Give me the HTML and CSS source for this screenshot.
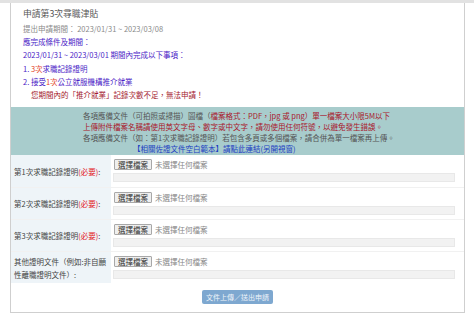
FILE: index.html
```html
<!DOCTYPE html>
<html lang="zh-Hant">
<head>
<meta charset="utf-8">
<link rel="stylesheet" href="styles.css">
</head>
<body>
<div class="topbar"></div>
<div class="panel">
  <div class="head">
    <div class="title">申請第3次尋職津貼</div>
    <div class="line period">提出申請期間： 2023/01/31 ~ 2023/03/08</div>
    <div class="line purple">應完成條件及期間：</div>
    <div class="line purple">2023/01/31 ~ 2023/03/01 期間內完成以下事項：</div>
    <div class="line purple">1. <span class="hl">3次</span>求職記錄證明</div>
    <div class="line purple">2. 接受<span class="hl">1次</span>公立就服機構推介就業</div>
    <div class="line warn">您期間內的「推介就業」記錄次數不足，無法申請！</div>
  </div>
  <div class="notice">
    <div class="nline">各項應備文件（可拍照或掃描）圖檔（<span class="red">檔案格式：PDF，jpg 或 png）單一檔案大小限5M以下</span></div>
    <div class="nline red">上傳附件檔案名稱請使用英文字母、數字或中文字，請勿使用任何符號，以避免發生錯誤。</div>
    <div class="nline">各項應備文件（如：第1次求職記錄證明）若包含多頁或多個檔案，請合併為單一檔案再上傳。</div>
    <div class="nline link">【相關佐證文件空白範本】請點此連結(另開視窗)</div>
  </div>
  <div class="form">
    <div class="row">
      <div class="label">第1次求職記錄證明<span class="req">(必要)</span>:</div>
      <div class="field">
        <div class="file"><span class="btn">選擇檔案</span><span class="none">未選擇任何檔案</span></div>
        <div class="bar"></div>
      </div>
    </div>
    <div class="row">
      <div class="label">第2次求職記錄證明<span class="req">(必要)</span>:</div>
      <div class="field">
        <div class="file"><span class="btn">選擇檔案</span><span class="none">未選擇任何檔案</span></div>
        <div class="bar"></div>
      </div>
    </div>
    <div class="row">
      <div class="label">第3次求職記錄證明<span class="req">(必要)</span>:</div>
      <div class="field">
        <div class="file"><span class="btn">選擇檔案</span><span class="none">未選擇任何檔案</span></div>
        <div class="bar"></div>
      </div>
    </div>
    <div class="row">
      <div class="label">其他證明文件（例如:非自願性離職證明文件）:</div>
      <div class="field">
        <div class="file"><span class="btn">選擇檔案</span><span class="none">未選擇任何檔案</span></div>
        <div class="bar"></div>
      </div>
    </div>
  </div>
  <div class="actions">
    <span class="submit">文件上傳／送出申請</span>
  </div>
</div>
</body>
</html>
```
FILE: styles.css
```css
html, body {
  margin: 0;
  padding: 0;
  background: #ffffff;
  font-family: "Noto Sans CJK TC", "Noto Sans", sans-serif;
  font-size: 7.5px;
  color: #555;
}
.topbar {
  height: 3px;
  background: #e2e2e2;
}
.panel {
  margin: 0 9px 0 10px;
  border: 1px solid #cfcfcf;
  border-top: none;
  background: #fff;
  height: 310px;
  box-sizing: border-box;
  display: flex;
  flex-direction: column;
}
.head {
  padding: 3px 0 6px 12px;
}
.title {
  font-size: 8.8px;
  line-height: 16px;
  color: #555;
}
.line {
  line-height: 13.2px;
}
.period {
  color: #8a8a8a;
}
.purple {
  color: #4a22c6;
}
.hl {
  color: #e2431e;
}
.warn {
  color: #a3172c;
  padding-left: 8px;
}
.notice {
  background: #a8cccc;
  padding: 3px 0 1px 72px;
  height: 48px;
  box-sizing: border-box;
}
.nline {
  line-height: 11px;
  color: #555;
  white-space: nowrap;
}
.red {
  color: #a8152a;
}
.link {
  color: #1c3ec2;
  padding-left: 50px;
}
.row {
  display: grid;
  grid-template-columns: 100px 1fr;
  height: 32px;
  border-top: 1px solid #f1f1f1;
  box-sizing: border-box;
}
.row:first-child {
  border-top: none;
}
.label {
  background: #eef4f8;
  color: #444;
  padding: 0 4px 0 3px;
  display: flex;
  align-items: center;
  line-height: 13px;
}
.req {
  color: #e3201c;
}
.field {
  padding: 4px 9px 0 2px;
}
.file {
  display: flex;
  align-items: center;
  height: 11px;
  margin-left: 1px;
}
.btn {
  border: 1px solid #a8a8a8;
  background: #efefef;
  color: #333;
  border-radius: 1px;
  height: 11px;
  line-height: 10px;
  padding: 0 3px;
  box-sizing: border-box;
  display: inline-flex;
  align-items: center;
}
.none {
  color: #888;
  margin-left: 3px;
}
.bar {
  margin-top: 3px;
  height: 9px;
  background: #f2f2f2;
  border: 1px solid #e8e8e8;
  box-sizing: border-box;
}
.actions {
  display: flex;
  justify-content: center;
  padding-top: 7px;
}
.submit {
  background: #7ea8d0;
  color: #eef4fa;
  height: 14px;
  width: 71px;
  border-radius: 2px;
  display: flex;
  align-items: center;
  justify-content: center;
  font-size: 7px;
}
```
